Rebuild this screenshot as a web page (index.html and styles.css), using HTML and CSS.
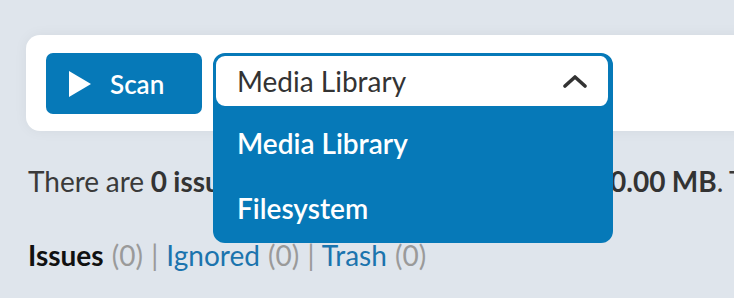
FILE: index.html
```html
<!DOCTYPE html>
<html lang="en">
<head>
    <meta charset="UTF-8">
    <meta name="viewport" content="width=device-width, initial-scale=1.0">
    <title>Media Cleaner</title>
    <link rel="stylesheet" href="styles.css">
</head>
<body>

    <div class="page">
        <div class="toolbar">
            <button class="scan-button">
                <svg class="play-icon" width="22" height="26" viewBox="0 0 22 26">
                    <polygon points="0,0 22,13 0,26" fill="#fff"/>
                </svg>
                <span>Scan</span>
            </button>

            <div class="select">
                <div class="select-box">
                    <span>Media Library</span>
                    <svg class="chevron" width="24" height="14" viewBox="0 0 24 14">
                        <polyline points="2,12 12,3 22,12" fill="none" stroke="#333" stroke-width="3.6" stroke-linecap="round" stroke-linejoin="round"/>
                    </svg>
                </div>
                <ul class="select-menu">
                    <li>Media Library</li>
                    <li>Filesystem</li>
                </ul>
            </div>
        </div>

        <p class="summary">
            There are <strong>0 issues</strong> with a total combined size of <strong>0.00 MB</strong>. The last scan was never.
        </p>

        <p class="tabs">
            <strong class="tab-current">Issues</strong> <span class="count">(0)</span> <span class="sep">|</span>
            <a href="#">Ignored</a> <span class="count">(0)</span> <span class="sep">|</span>
            <a href="#">Trash</a> <span class="count">(0)</span>
        </p>
    </div>

</body>
</html>
```

FILE: styles.css
```css
body {
    margin: 0;
    background-color: #dfe5ec;
    font-family: Lato, "Noto Sans", sans-serif;
    color: #3a3a3a;
    overflow: hidden;
}
.page {
    width: 1000px;
    padding: 35px 0 0 26px;
}
.toolbar {
    display: flex;
    align-items: flex-start;
    gap: 11px;
    background-color: #fff;
    border-radius: 14px;
    padding: 18px 20px 17px;
    box-shadow: 0 0 14px rgba(0, 0, 0, 0.05);
}
.scan-button {
    display: flex;
    align-items: center;
    gap: 19px;
    width: 156px;
    height: 61px;
    padding: 0 0 0 23px;
    border: none;
    border-radius: 7px;
    background-color: #0679b8;
    color: #fff;
    font-family: inherit;
    font-size: 26px;
    font-weight: 600;
    cursor: pointer;
}
.play-icon {
    display: block;
}
.select {
    position: relative;
    width: 400px;
}
.select-box {
    position: relative;
    z-index: 2;
    display: flex;
    align-items: center;
    justify-content: space-between;
    height: 50px;
    padding: 0 21px 0 21px;
    border: 3px solid #0679b8;
    border-right-width: 5px;
    border-radius: 12px;
    background-color: #fff;
    font-size: 28px;
    color: #333;
}
.chevron {
    display: block;
}
.select-menu {
    position: absolute;
    z-index: 1;
    top: 40px;
    left: 0;
    right: 0;
    margin: 0;
    padding: 18px 0 2px;
    list-style: none;
    background-color: #0679b8;
    border-radius: 0 0 12px 12px;
}
.select-menu li {
    padding-left: 24px;
    line-height: 65px;
    font-size: 28px;
    font-weight: 600;
    color: #fff;
}
.summary {
    margin: 33px 0 0 2px;
    font-size: 28px;
    color: #3a3a3a;
    white-space: nowrap;
    word-spacing: -0.5px;
}
.summary strong {
    color: #333;
}
.tabs {
    margin: 40px 0 0 2px;
    font-size: 28px;
    color: #999;
    word-spacing: 1px;
}
.tab-current {
    color: #111;
}
.tabs a {
    color: #1b74ae;
    text-decoration: none;
}
.count,
.sep {
    color: #9a9a9a;
}
```
